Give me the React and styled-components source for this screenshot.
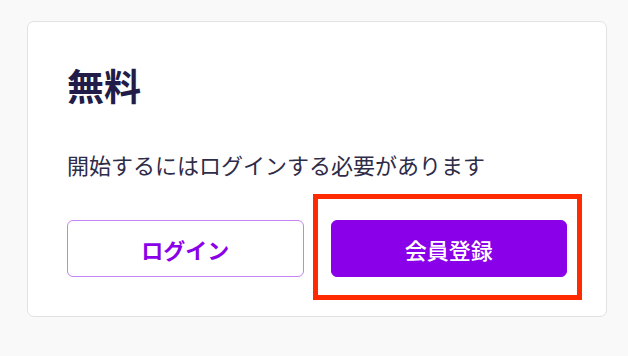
import React from "react"
import styled, { createGlobalStyle } from "styled-components"

const GlobalStyle = createGlobalStyle`
  html, body {
    margin: 0;
    padding: 0;
    background: #f9f9f9;
  }
  body {
    font-family: "Noto Sans CJK JP", "Noto Sans", sans-serif;
  }
`

const Page = styled.div`
  width: 628px;
  height: 356px;
  padding: 21px 21px 0 27px;
  box-sizing: border-box;
`

const Card = styled.div`
  width: 580px;
  height: 296px;
  box-sizing: border-box;
  background: #ffffff;
  border: 1px solid #e2e2e4;
  border-radius: 7px;
  padding: 41px 39px 0 39px;
`

const Title = styled.h1`
  margin: 0;
  font-size: 37px;
  line-height: 44px;
  font-weight: 700;
  color: #221c48;
`

const Message = styled.p`
  margin: 42px 0 0;
  font-size: 22px;
  line-height: 30px;
  color: #2e2c48;
`

const Actions = styled.div`
  display: grid;
  grid-template-columns: 1fr 1fr;
  gap: 27px;
  margin-top: 41px;
`

const Button = styled.button`
  height: 57px;
  width: 100%;
  box-sizing: border-box;
  border-radius: 6px;
  font-family: inherit;
  font-size: 22px;
  font-weight: ${(p) => (p.$primary ? 500 : 700)};
  cursor: pointer;
  border: 1px solid ${(p) => (p.$primary ? "#8a00e8" : "#c483f2")};
  background: ${(p) => (p.$primary ? "#8a00e8" : "#ffffff")};
  color: ${(p) => (p.$primary ? "#ffffff" : "#8a00e8")};
`

const Highlighted = styled.div`
  position: relative;
`

const Outline = styled.div`
  position: absolute;
  top: -26px;
  left: -18px;
  right: -15px;
  bottom: -23px;
  border: 5px solid #ff2a00;
  pointer-events: none;
`

export default function App() {
  return (
    <>
      <GlobalStyle />
      <Page>
        <Card>
          <Title>無料</Title>
          <Message>開始するにはログインする必要があります</Message>
          <Actions>
            <Button>ログイン</Button>
            <Highlighted>
              <Button $primary>会員登録</Button>
              <Outline />
            </Highlighted>
          </Actions>
        </Card>
      </Page>
    </>
  )
}
